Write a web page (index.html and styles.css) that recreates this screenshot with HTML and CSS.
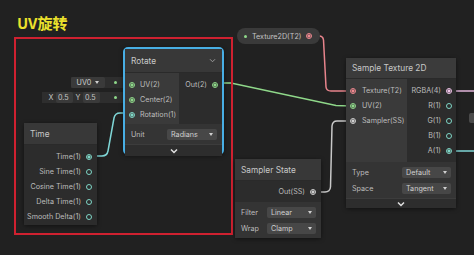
FILE: index.html
```html
<!DOCTYPE html>
<html lang="en">
<head>
    <meta charset="UTF-8">
    <title>UV旋转</title>
    <link rel="stylesheet" href="styles.css">
</head>
<body>
    <div class="graph">
        <!-- Edges -->
        <svg class="edges" width="474" height="255" viewBox="0 0 474 255">
            <path d="M92 156 L102 156 Q107 156 108 151 L114 118 Q115 113 120 113 L130 113" stroke="#7fd6d6"/>
            <path d="M117 82.5 L130 82.5" stroke="#8fd88a"/>
            <path d="M117 97.5 L130 97.5" stroke="#8fd88a"/>
            <path d="M217 83 L231 83 L336 105.5 L351 106" stroke="#8fd88a"/>
            <path d="M312 36 L319 36 Q323 36 323.5 40 L326 87 Q326.5 91 331 91 L351 91" stroke="#e8848c"/>
            <path d="M316 192 L325 192 Q330 192 330.5 187 L332 126 Q332.5 121 337 121 L351 121" stroke="#c8c8c8"/>
            <path d="M452 91 L474 91" stroke="#e2b4da"/>
            <path d="M452 151 L474 151" stroke="#7fd6d6"/>
        </svg>

        <!-- Group -->
        <div class="group">
            <div class="group-title">UV旋转</div>
            <div class="group-frame"></div>
        </div>

        <!-- Inline inputs -->
        <div class="inline uv-input">
            <span class="field drop">UV0 <i class="caret"></i></span>
            <span class="dot green"></span>
        </div>
        <div class="inline xy-input">
            <span class="axis">X</span><span class="field num">0.5</span>
            <span class="axis">Y</span><span class="field num">0.5</span>
            <span class="dot green"></span>
        </div>

        <!-- Rotate -->
        <div class="node rotate selected">
            <div class="node-head">Rotate <svg class="chev small" width="7" height="5" viewBox="0 0 8 6"><path d="M1 1.5 L4 4.5 L7 1.5"/></svg></div>
            <div class="node-body">
                <div class="col inputs">
                    <div class="row"><span class="port vec2 on"></span>UV(2)</div>
                    <div class="row"><span class="port vec2 on"></span>Center(2)</div>
                    <div class="row"><span class="port float on"></span>Rotation(1)</div>
                </div>
                <div class="col outputs">
                    <div class="row">Out(2)<span class="port vec2 on"></span></div>
                </div>
            </div>
            <div class="settings">
                <div class="setting"><span>Unit</span><span class="drop wide">Radians <i class="caret"></i></span></div>
            </div>
            <div class="expand"><svg class="chev" width="8" height="6" viewBox="0 0 8 6"><path d="M1 1.5 L4 4.5 L7 1.5"/></svg></div>
        </div>

        <!-- Time -->
        <div class="node time">
            <div class="node-head">Time</div>
            <div class="node-body">
                <div class="col outputs full">
                    <div class="row">Time(1)<span class="port float on"></span></div>
                    <div class="row">Sine Time(1)<span class="port float"></span></div>
                    <div class="row">Cosine Time(1)<span class="port float"></span></div>
                    <div class="row">Delta Time(1)<span class="port float"></span></div>
                    <div class="row">Smooth Delta(1)<span class="port float"></span></div>
                </div>
            </div>
        </div>

        <!-- Texture property -->
        <div class="prop">
            <span class="dot green"></span>
            <span class="prop-name">Texture2D(T2)</span>
            <span class="port tex on"></span>
        </div>

        <!-- Sample Texture 2D -->
        <div class="node sample">
            <div class="node-head">Sample Texture 2D</div>
            <div class="node-body">
                <div class="col inputs">
                    <div class="row"><span class="port tex on"></span>Texture(T2)</div>
                    <div class="row"><span class="port vec2 on"></span>UV(2)</div>
                    <div class="row"><span class="port ss on"></span>Sampler(SS)</div>
                </div>
                <div class="col outputs">
                    <div class="row">RGBA(4)<span class="port vec4 on"></span></div>
                    <div class="row">R(1)<span class="port float"></span></div>
                    <div class="row">G(1)<span class="port float"></span></div>
                    <div class="row">B(1)<span class="port float"></span></div>
                    <div class="row">A(1)<span class="port float on"></span></div>
                </div>
            </div>
            <div class="settings">
                <div class="setting"><span>Type</span><span class="drop wide">Default <i class="caret"></i></span></div>
                <div class="setting"><span>Space</span><span class="drop wide">Tangent <i class="caret"></i></span></div>
            </div>
            <div class="expand"><svg class="chev" width="8" height="6" viewBox="0 0 8 6"><path d="M1 1.5 L4 4.5 L7 1.5"/></svg></div>
        </div>

        <!-- Sampler State -->
        <div class="node sampler">
            <div class="node-head">Sampler State</div>
            <div class="node-body">
                <div class="col outputs full">
                    <div class="row">Out(SS)<span class="port ss on"></span></div>
                </div>
            </div>
            <div class="settings">
                <div class="setting"><span>Filter</span><span class="drop wide">Linear <i class="caret"></i></span></div>
                <div class="setting"><span>Wrap</span><span class="drop wide">Clamp <i class="caret"></i></span></div>
            </div>
        </div>

        <!-- Edge of a node off screen -->
        <div class="stub"></div>
    </div>
</body>
</html>
```

FILE: styles.css
```css
/* Canvas */
body {
    margin: 0;
    background-color: #212121;
    font-family: 'Inter', 'Noto Sans', sans-serif;
    color: #bdbdbd;
}

.graph {
    position: relative;
    width: 474px;
    height: 255px;
    overflow: hidden;
    background-color: #212121;
}

.edges {
    position: absolute;
    left: 0;
    top: 0;
}

.edges path {
    fill: none;
    stroke-width: 1.5;
}

/* Group */
.group {
    position: absolute;
    left: 14px;
    top: 12px;
}

.group-title {
    font-family: 'Noto Sans CJK SC', 'Noto Sans', sans-serif;
    font-weight: bold;
    font-size: 15px;
    line-height: 22px;
    height: 25px;
    padding-left: 3px;
    color: #ece12c;
}

.group-frame {
    width: 215px;
    height: 194px;
    border: 2px solid #cf2130;
}

/* Nodes */
.node {
    position: absolute;
    box-sizing: border-box;
    background-color: #2c2c2c;
    font-size: 7.2px;
    border-radius: 3px;
    box-shadow: 0 1px 4px rgba(0, 0, 0, 0.5);
}

.node.selected {
    border: 2px solid #48aee4;
    border-radius: 5px;
}

.node-head {
    display: flex;
    align-items: center;
    justify-content: space-between;
    box-sizing: border-box;
    padding: 0 6px;
    font-size: 8.3px;
    color: #c8c8c8;
    background-color: #383838;
    border-bottom: 1px solid #2a2a2a;
}

.node-body {
    display: flex;
}

.col {
    box-sizing: border-box;
    padding: 4px 0;
}

.inputs {
    background-color: #3a3a3a;
}

.outputs {
    flex: 1;
    background-color: #2c2c2c;
}

.row {
    display: flex;
    align-items: center;
    height: 15px;
    gap: 5px;
    white-space: nowrap;
}

.inputs .row {
    padding-left: 4px;
}

.outputs .row {
    justify-content: flex-end;
    padding-right: 5px;
}

/* Ports */
.port {
    box-sizing: border-box;
    width: 6px;
    height: 6px;
    border-radius: 50%;
    border: 1px solid currentColor;
    flex-shrink: 0;
}

.port.on {
    background: radial-gradient(circle, currentColor 0 1.3px, transparent 1.8px);
}

.vec2 { color: #8fd88a; }
.float { color: #7fd6c6; }
.tex { color: #f08890; }
.ss { color: #cfcfcf; }
.vec4 { color: #f2c4ea; }

.dot {
    width: 3px;
    height: 3px;
    border-radius: 50%;
    flex-shrink: 0;
}

.dot.green {
    background-color: #8fd88a;
}

/* Settings area */
.settings {
    padding: 2px 0;
    background-color: #343434;
}

.setting {
    display: flex;
    align-items: center;
    justify-content: space-between;
    height: 16px;
    padding: 0 5px 0 6px;
}

.drop {
    display: flex;
    align-items: center;
    justify-content: space-between;
    box-sizing: border-box;
    height: 11px;
    padding: 0 4px;
    border-radius: 2px;
    background-color: #474747;
    color: #d0d0d0;
}

.caret {
    width: 0;
    height: 0;
    border-left: 2.5px solid transparent;
    border-right: 2.5px solid transparent;
    border-top: 3px solid #d0d0d0;
}

.expand {
    display: flex;
    align-items: center;
    justify-content: center;
    background-color: #2d2d2d;
    border-top: 1px solid #3c3c3c;
}

.chev path {
    fill: none;
    stroke: #e0e0e0;
    stroke-width: 1.5;
}

.chev.small path {
    stroke: #9a9a9a;
    stroke-width: 1.2;
}

/* Rotate */
.rotate {
    left: 123px;
    top: 47px;
    width: 101px;
    height: 108px;
}

.rotate .node-head {
    height: 24px;
}

.rotate .inputs {
    width: 54px;
    height: 51px;
}

.rotate .outputs .row {
    padding-right: 4px;
}

.rotate .drop.wide {
    width: 50px;
}

.rotate .expand {
    height: 11px;
}

/* Time */
.time {
    left: 24px;
    top: 123px;
    width: 73px;
    height: 102px;
}

.time .node-head {
    height: 22px;
}

.time .outputs {
    padding-bottom: 1px;
}

/* Texture property */
.prop {
    position: absolute;
    left: 237px;
    top: 28px;
    width: 83px;
    height: 16px;
    box-sizing: border-box;
    display: flex;
    align-items: center;
    gap: 5px;
    padding: 0 9px 0 7px;
    border-radius: 8px;
    background-color: #3a3a3a;
    font-size: 7.2px;
    color: #c4c4c4;
}

.prop-name {
    flex: 1;
}

/* Sample Texture 2D */
.sample {
    left: 346px;
    top: 58px;
    width: 110px;
    height: 150px;
}

.sample .node-head {
    height: 21px;
    background-color: #3b3b3b;
}

.sample .inputs {
    width: 61px;
}

.sample .inputs .row {
    gap: 6px;
}

.sample .outputs .row {
    padding-right: 4px;
}

.sample .drop.wide {
    width: 49px;
}

.sample .expand {
    height: 9px;
}

/* Sampler State */
.sampler {
    left: 235px;
    top: 159px;
    width: 86px;
    height: 79px;
}

.sampler .node-head {
    height: 22px;
}

.sampler .outputs {
    padding: 3px 0;
}

.sampler .drop.wide {
    width: 49px;
}

/* Inline inputs */
.inline {
    position: absolute;
    display: flex;
    align-items: center;
    box-sizing: border-box;
    height: 11px;
    background-color: #2e2e2e;
    font-size: 7.2px;
    color: #c4c4c4;
}

.uv-input {
    left: 71px;
    top: 77px;
    width: 52px;
}

.xy-input {
    left: 42px;
    top: 92px;
    width: 81px;
    padding-left: 4px;
}

.inline .field {
    box-sizing: border-box;
    height: 11px;
    display: flex;
    align-items: center;
    background-color: #3a3a3a;
    border-radius: 2px;
}

.uv-input .field {
    width: 34px;
    justify-content: center;
    gap: 4px;
}

.xy-input .field {
    width: 17px;
    padding-left: 2px;
}

.xy-input .axis {
    width: 10px;
    text-align: center;
}

.inline .dot {
    margin-left: auto;
    margin-right: 6px;
}

.stub {
    position: absolute;
    left: 469px;
    top: 113px;
    width: 8px;
    height: 10px;
    border-radius: 2px;
    background-color: #4a4a4a;
}
```
